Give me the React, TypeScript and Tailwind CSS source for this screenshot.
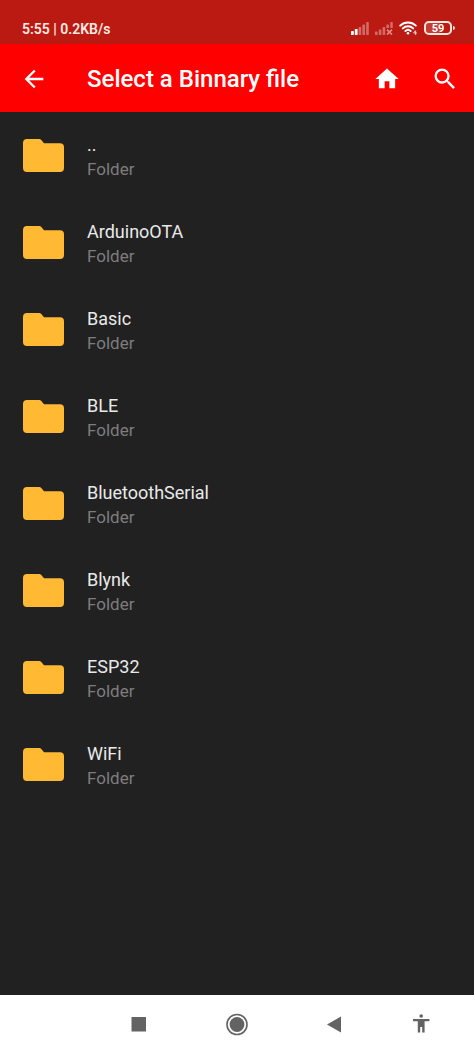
import type { ReactNode } from "react";

type Entry = { name: string; kind: string };

const entries: Entry[] = [
  { name: "..", kind: "Folder" },
  { name: "ArduinoOTA", kind: "Folder" },
  { name: "Basic", kind: "Folder" },
  { name: "BLE", kind: "Folder" },
  { name: "BluetoothSerial", kind: "Folder" },
  { name: "Blynk", kind: "Folder" },
  { name: "ESP32", kind: "Folder" },
  { name: "WiFi", kind: "Folder" },
];

function SignalIcon() {
  return (
    <svg width="18" height="13" viewBox="0 0 18 13" fill="#fff" aria-hidden="true">
      <rect x="0" y="9" width="2.8" height="4" rx="0.6" />
      <rect x="3.8" y="7" width="2.8" height="6" rx="0.6" />
      <g opacity="0.35">
        <rect x="7.6" y="5" width="2.6" height="8" rx="0.6" />
        <rect x="11.4" y="2.5" width="2.6" height="10.5" rx="0.6" />
        <rect x="15.2" y="0" width="2.6" height="13" rx="0.6" />
      </g>
    </svg>
  );
}

function NoSignalIcon() {
  return (
    <svg width="18" height="13" viewBox="0 0 18 13" fill="#fff" aria-hidden="true">
      <g opacity="0.35">
        <rect x="0" y="9.5" width="2.6" height="3.5" rx="0.6" />
        <rect x="3.8" y="7.5" width="2.6" height="5.5" rx="0.6" />
        <rect x="7.6" y="5" width="2.6" height="8" rx="0.6" />
        <rect x="11.4" y="2.5" width="2.6" height="3.5" rx="0.6" />
        <rect x="15.2" y="0" width="2.6" height="6" rx="0.6" />
      </g>
      <path d="m12 7.6 5 5m0-5-5 5" stroke="#fff" strokeWidth="1.5" opacity="0.5" />
    </svg>
  );
}

function WifiIcon() {
  return (
    <svg width="19" height="14" viewBox="0 0 19 14" fill="none" aria-hidden="true">
      <g stroke="#fff" strokeWidth="2" strokeLinecap="round">
        <path d="M1.2 4.6a11.2 11.2 0 0 1 15.6 0" />
        <path d="M3.8 7.4a7.4 7.4 0 0 1 10.4 0" />
        <path d="M6.4 10a3.8 3.8 0 0 1 5.2 0" />
      </g>
      <circle cx="9" cy="12.2" r="1.3" fill="#fff" />
      <path d="M16.4 9.4 14.6 12H18M16.6 10v4" stroke="#fff" strokeWidth="0.9" opacity="0.8" />
    </svg>
  );
}

function Battery({ level }: { level: number }) {
  return (
    <div className="flex items-center gap-px">
      <div className="relative flex h-[14px] w-[28px] items-center justify-center overflow-hidden rounded-[5px] border-2 border-[#ffe6dc]">
        <div
          className="absolute inset-y-0 left-0 bg-white/15"
          style={{ width: `${level}%` }}
        />
        <span className="relative pt-px text-[11px] leading-none font-bold text-white">{level}</span>
      </div>
      <div className="h-1 w-0.5 rounded-r-sm bg-[#ffe6dc]" />
    </div>
  );
}

function StatusBar() {
  return (
    <div className="flex h-11 items-end justify-between bg-[#bb1a12] pr-[19px] pl-[22px] text-[#ffece4]">
      <div className="pb-[5px] text-sm font-semibold">5:55 | 0.2KB/s</div>
      <div className="flex items-center gap-[6px] pb-[9px]">
        <SignalIcon />
        <NoSignalIcon />
        <WifiIcon />
        <Battery level={59} />
      </div>
    </div>
  );
}

function IconButton({ label, children }: { label: string; children: ReactNode }) {
  return (
    <button
      type="button"
      aria-label={label}
      className="flex size-7 shrink-0 items-center justify-center"
    >
      {children}
    </button>
  );
}

function AppBar() {
  return (
    <header className="flex h-[68px] items-center bg-[#ff0000] pt-0.5 pr-[15px] pl-5 text-white">
      <IconButton label="Back">
        <svg width="28" height="28" viewBox="0 0 24 24" fill="currentColor">
          <path d="M20 11H7.83l5.59-5.59L12 4l-8 8 8 8 1.41-1.41L7.83 13H20z" />
        </svg>
      </IconButton>
      <h1 className="ml-[39px] flex-1 truncate text-2xl font-medium">
        Select a Binnary file
      </h1>
      <div className="flex gap-[30px]">
        <IconButton label="Home">
          <svg width="28" height="28" viewBox="0 0 24 24" fill="currentColor">
            <path d="M10 20v-6h4v6h5v-8h3L12 3 2 12h3v8z" />
          </svg>
        </IconButton>
        <IconButton label="Search">
          <svg width="28" height="28" viewBox="0 0 24 24" fill="currentColor">
            <path d="M15.5 14h-.79l-.28-.27A6.47 6.47 0 0 0 16 9.5 6.5 6.5 0 1 0 9.5 16c1.61 0 3.09-.59 4.23-1.57l.27.28v.79l5 4.99L20.49 19zm-6 0a4.5 4.5 0 1 1 0-9 4.5 4.5 0 0 1 0 9z" />
          </svg>
        </IconButton>
      </div>
    </header>
  );
}

function FolderRow({ entry }: { entry: Entry }) {
  return (
    <li>
      <button type="button" className="flex h-[87px] w-full items-center gap-[23px] pl-[23px] text-left">
        <svg width="41" height="33" viewBox="0 0 41 33" fill="#ffb932" aria-hidden="true">
          <path d="M4 0h12.200q1.300 0 2.100.9L21 4.200h16a4 4 0 0 1 4 4V29a4 4 0 0 1-4 4H4a4 4 0 0 1-4-4V4a4 4 0 0 1 4-4z" />
        </svg>
        <span className="flex flex-col pt-[3px]">
          <span className="text-lg leading-6 text-[#e9e9e9]">{entry.name}</span>
          <span className="text-[17px] leading-6 text-[#7d7d7d]">{entry.kind}</span>
        </span>
      </button>
    </li>
  );
}

function NavBar() {
  return (
    <nav className="grid h-[58px] grid-cols-[98fr_98fr_98fr_74fr] place-items-center bg-white pr-4 pl-[90px] text-[#636363]">
      <IconButton label="Recent apps">
        <svg width="24" height="24" viewBox="0 0 24 24" fill="currentColor">
          <rect x="4.5" y="5" width="14.5" height="14.5" />
        </svg>
      </IconButton>
      <IconButton label="Home screen">
        <svg width="24" height="24" viewBox="0 0 24 24">
          <circle cx="12" cy="12.5" r="10" fill="none" stroke="currentColor" strokeWidth="1.6" />
          <circle cx="12" cy="12.5" r="7.4" fill="currentColor" />
        </svg>
      </IconButton>
      <IconButton label="Go back">
        <svg width="24" height="24" viewBox="0 0 24 24" fill="currentColor">
          <path d="M4 12.5 18 4.5v16z" />
        </svg>
      </IconButton>
      <IconButton label="Accessibility">
        <svg width="24" height="24" viewBox="0 0 24 24" fill="currentColor">
          <circle cx="12.2" cy="4" r="1.8" />
          <path d="M4 7h16.4v2.2h-4.8V20.500h-2.400v-5.500h-2v5.500H8.800V9.200H4z" />
        </svg>
      </IconButton>
    </nav>
  );
}

export default function App() {
  return (
    <div className="flex min-h-screen flex-col bg-[#212121] font-[Roboto,sans-serif]">
      <StatusBar />
      <AppBar />
      <main className="flex-1">
        <ul>
          {entries.map((entry) => (
            <FolderRow key={entry.name} entry={entry} />
          ))}
        </ul>
      </main>
      <NavBar />
    </div>
  );
}
